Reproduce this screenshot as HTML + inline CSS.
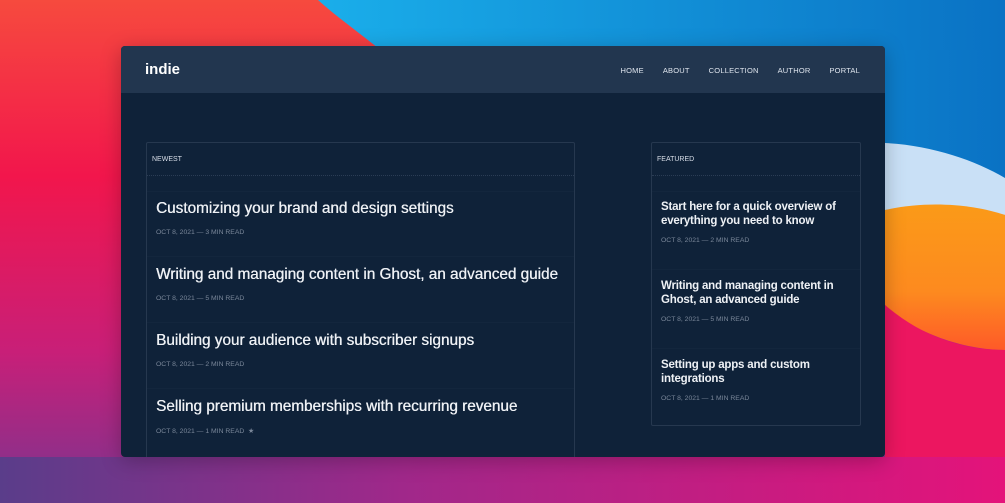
<!DOCTYPE html>
<html><head><meta charset="utf-8"><style>
*{margin:0;padding:0;box-sizing:border-box}
body{width:1005px;height:503px;overflow:hidden;position:relative;font-family:"Liberation Sans",sans-serif;background:#e8184a}
svg.bg{position:absolute;left:0;top:0}
.win{position:absolute;left:121px;top:46px;width:764px;height:411px;background:#0f2239;border-radius:4px;overflow:hidden;box-shadow:0 4px 20px rgba(0,0,0,.25)}
.hd{height:47px;background:#22364f;position:relative}
.logo{position:absolute;left:24px;top:15px;color:#fff;font-weight:700;font-size:15px}
.nav{position:absolute;right:25px;top:20px;display:flex;gap:19px;color:#dfe5ee;font-size:7.5px;letter-spacing:.2px}
.box{position:absolute;border:1px solid #26384f;border-radius:2px}
.lbl{position:absolute;top:13px;font-size:7px;color:#d8dee8}
.dash{position:absolute;left:0;right:0;top:32px;border-top:1px dotted #2b3d55}
.t{position:absolute;color:#eef1f5;white-space:nowrap}
.t.big{font-size:15.3px;font-weight:400;text-shadow:0.35px 0 0 #eef1f5}
.t.sm{font-size:11.5px;line-height:14px;font-weight:700;white-space:normal;letter-spacing:-.2px}
.m{position:absolute;color:#7a8799;font-size:6.8px}
.sep{position:absolute;left:0;right:0;border-top:1px solid #13263d}
</style></head><body>
<svg class="bg" width="1005" height="503" viewBox="0 0 1005 503">
<defs>
<linearGradient id="l" x1="0" y1="0" x2="0" y2="1"><stop offset="0" stop-color="#f64a3e"/><stop offset=".35" stop-color="#f2164c"/><stop offset=".7" stop-color="#c81f78"/><stop offset="1" stop-color="#7a3590"/></linearGradient>
<linearGradient id="b" x1="0" y1="0" x2="1" y2="0"><stop offset="0" stop-color="#1aaeea"/><stop offset="1" stop-color="#0a72c4"/></linearGradient>
<linearGradient id="o" x1="0" y1="0" x2="0" y2="1"><stop offset="0" stop-color="#fb9a18"/><stop offset=".6" stop-color="#fd8a1f"/><stop offset="1" stop-color="#fe5a28"/></linearGradient>
<linearGradient id="bt" x1="0" y1="0" x2="1" y2="0"><stop offset="0" stop-color="#5a3d8a"/><stop offset=".4" stop-color="#a0288a"/><stop offset="1" stop-color="#e4137a"/></linearGradient>
</defs>
<rect width="1005" height="503" fill="url(#l)"/>
<path d="M318 0 C340 20 370 40 392 60 L1005 60 L1005 0Z" fill="url(#b)"/>
<rect x="380" y="50" width="625" height="160" fill="url(#b)"/>
<path d="M885 143 C930 145 975 160 1005 178 L1005 215 C965 205 920 205 885 210Z" fill="#c9e0f6"/>
<path d="M885 210 C930 200 975 205 1005 215 L1005 350 C960 350 910 330 885 305Z" fill="url(#o)"/>
<path d="M885 305 C920 335 960 350 1005 350 L1005 503 L885 503Z" fill="#ec1660"/>
<rect x="0" y="457" width="1005" height="46" fill="url(#bt)"/>
</svg>
<div class="win">
<div class="hd"><div class="logo">indie</div>
<div class="nav"><span>HOME</span><span>ABOUT</span><span>COLLECTION</span><span>AUTHOR</span><span>PORTAL</span></div></div>
<div class="box" style="left:25px;top:96px;width:429px;height:330px">
<div class="lbl" style="left:5px">NEWEST</div><div class="dash"></div>
<div class="sep" style="top:48px"></div>
<div class="t big" style="left:9px;top:57px">Customizing your brand and design settings</div>
<div class="m" style="left:9px;top:86px">OCT 8, 2021 — 3 MIN READ</div>
<div class="sep" style="top:113px"></div>
<div class="t big" style="left:9px;top:123px">Writing and managing content in Ghost, an advanced guide</div>
<div class="m" style="left:9px;top:152px">OCT 8, 2021 — 5 MIN READ</div>
<div class="sep" style="top:179px"></div>
<div class="t big" style="left:9px;top:189px">Building your audience with subscriber signups</div>
<div class="m" style="left:9px;top:218px">OCT 8, 2021 — 2 MIN READ</div>
<div class="sep" style="top:245px"></div>
<div class="t big" style="left:9px;top:255px">Selling premium memberships with recurring revenue</div>
<div class="m" style="left:9px;top:284px">OCT 8, 2021 — 1 MIN READ &nbsp;★</div>
</div>
<div class="box" style="left:530px;top:96px;width:210px;height:284px">
<div class="lbl" style="left:5px">FEATURED</div><div class="dash"></div>
<div class="sep" style="top:48px"></div>
<div class="t sm" style="left:9px;top:57px;width:195px">Start here for a quick overview of everything you need to know</div>
<div class="m" style="left:9px;top:94px">OCT 8, 2021 — 2 MIN READ</div>
<div class="sep" style="top:126px"></div>
<div class="t sm" style="left:9px;top:136px;width:195px">Writing and managing content in Ghost, an advanced guide</div>
<div class="m" style="left:9px;top:173px">OCT 8, 2021 — 5 MIN READ</div>
<div class="sep" style="top:205px"></div>
<div class="t sm" style="left:9px;top:215px;width:175px">Setting up apps and custom integrations</div>
<div class="m" style="left:9px;top:252px">OCT 8, 2021 — 1 MIN READ</div>
</div>
</div>
</body></html>
